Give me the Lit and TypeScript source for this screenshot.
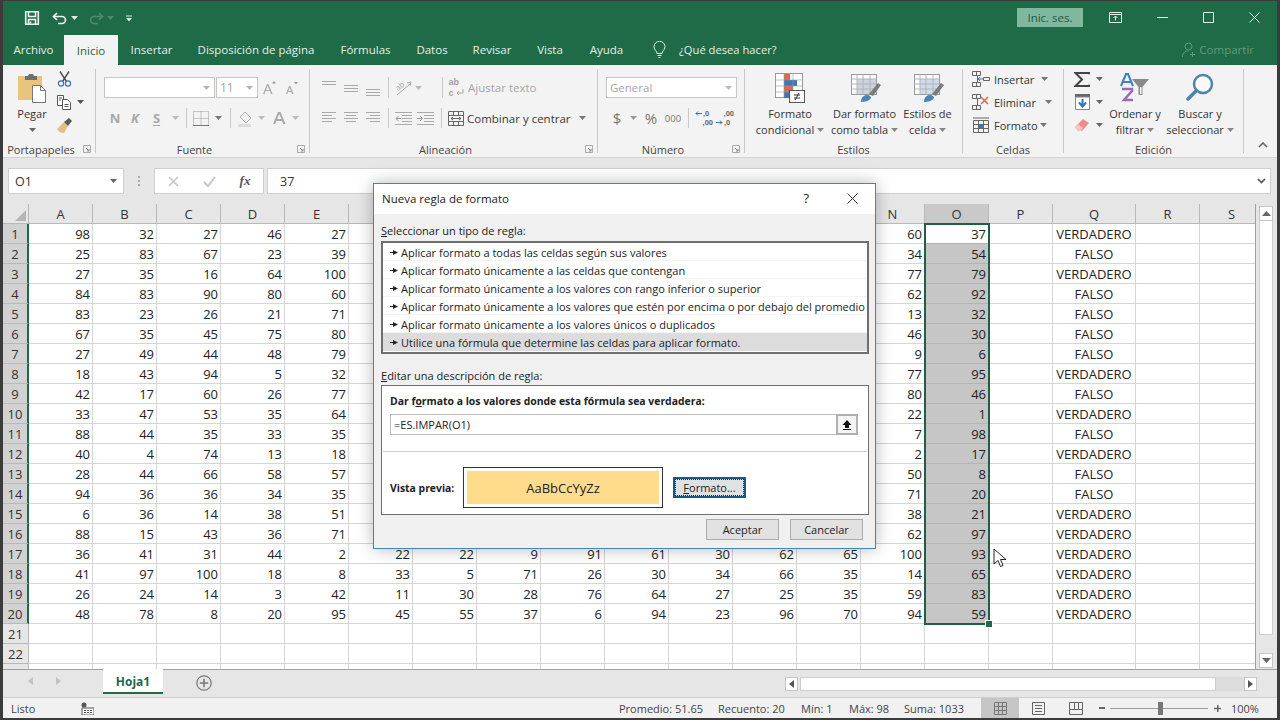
import { LitElement, html, svg, css } from 'lit';
import { customElement } from 'lit/decorators.js';

const COLS = ['A','B','C','D','E','F','G','H','I','J','K','L','M','N','O','P','Q','R','S'];
const ABCDE = [
  [98,32,27,46,27],[25,83,67,23,39],[27,35,16,64,100],[84,83,90,80,60],[83,23,26,21,71],
  [67,35,45,75,80],[27,49,44,48,79],[18,43,94,5,32],[42,17,60,26,77],[33,47,53,35,64],
  [88,44,35,33,35],[40,4,74,13,18],[28,44,66,58,57],[94,36,36,34,35],[6,36,14,38,51],
  [88,15,43,36,71],[36,41,31,44,2],[41,97,100,18,8],[26,24,14,3,42],[48,78,8,20,95],
];
// columns F to M, only the rows that stick out below the dialog
const FM: Record<number, number[]> = {
  16: [22,22,9,91,61,30,62,65],
  17: [33,5,71,26,30,34,66,35],
  18: [11,30,28,76,64,27,25,35],
  19: [45,55,37,6,94,23,96,70],
};
const N = [60,34,77,62,13,46,9,77,80,22,7,2,50,71,38,62,100,14,59,94];
const O = [37,54,79,92,32,30,6,95,46,1,98,17,8,20,21,97,93,65,83,59];

const RULES = [
  'Aplicar formato a todas las celdas según sus valores',
  'Aplicar formato únicamente a las celdas que contengan',
  'Aplicar formato únicamente a los valores con rango inferior o superior',
  'Aplicar formato únicamente a los valores que estén por encima o por debajo del promedio',
  'Aplicar formato únicamente a los valores únicos o duplicados',
  'Utilice una fórmula que determine las celdas para aplicar formato.',
];

const caret = (color = '#8a8a8a') => html`<svg width="7" height="4" viewBox="0 0 7 4"><path d="M0 0h7L3.5 4z" fill=${color}/></svg>`;
const launcher = () => html`<svg width="8" height="8" viewBox="0 0 8 8" fill="none" stroke="#aaa"><path d="M.5 7.5v-7h7v7z"/><path d="M3 3l3 3M6 4v2H4" stroke="#888"/></svg>`;
const vsep = () => html`<span class="vsep"></span>`;

const lines = (ys: [number, number, number][], color = '#a9a9a9') => html`<svg width="16" height="16" viewBox="0 0 16 16" stroke=${color} fill="none">${ys.map(([y, a, b]) => svg`<path d="M${a} ${y + 0.5}H${b}"/>`)}</svg>`;
const tableIcon = (fill: string) => html`<svg width="34" height="30" viewBox="0 0 34 30" fill="none">
  <rect x="3.500" y="1.500" width="25" height="20" fill="#fff" stroke="#9a9a9a"/>
  <rect x="9" y="6" width="19" height="15" fill=${fill}/>
  <path d="M3.500 6h25M3.500 11h25M3.500 16h25M9 1.500v20M15 1.500v20M22 1.500v20" stroke="#b4b4b4"/>
  <path d="M21 21L30 10l3 2-8 11z" fill="#7b7b7b"/>
  <path d="M13 29c0-5 3-7 6-7 3 0 4 2 4 3-2 3-6 4-10 4z" fill="#4a86b5"/>
</svg>`;

@customElement('app-root')
export class AppRoot extends LitElement {
  static styles = css`
    :host { display: block; width: 1280px; height: 720px; overflow: hidden; }
    * { box-sizing: border-box; }
    svg { display: block; flex: none; }
    .app {
      position: relative; width: 1280px; height: 720px; padding: 1px 3px 2px;
      background: #3b3b3b; font-family: "Open Sans", sans-serif; font-size: 11px; color: #333;
    }
    .win { display: flex; flex-direction: column; height: 717px; background: #e6e6e6; }
    .cell { display: flex; align-items: center; justify-content: center; min-width: 0; }
    .vsep { width: 1px; height: 100%; background: #c8c8c8; }

    .title { flex: none; height: 32px; background: #1f6b47; display: flex; align-items: center; }
    .qat { display: flex; align-items: center; margin: 2px 0 0 21px; }
    .qat .cell { height: 20px; }
    .undo { margin-left: 12px; } .undoc { margin-left: 4px; } .redo { margin-left: 11px; } .redoc { margin-left: 3px; } .custom { margin-left: 12px; }
    .title .right { margin-left: auto; display: flex; align-items: center; }
    .signin {
      width: 66px; height: 19px; margin-right: 26px; background: #80b89f; color: #1f5a40;
      display: flex; align-items: center; justify-content: center; font-size: 11.5px;
    }
    .winbtn { width: 46px; height: 20px; display: flex; align-items: center; justify-content: center; }
    .winbtn.disp { width: 13px; margin-right: 17px; }

    .tabs { flex: none; height: 32px; background: #1f6b47; display: flex; color: #e4efe9; font-size: 11.5px; }
    .tablist { display: grid; grid-template-columns: 61px 54px 67px 142px 77px 56px 64px 52px 61px; }
    .tab { display: flex; align-items: center; justify-content: center; padding-top: 1px; }
    .tab.on { background: #f3f3f3; color: #2d5d46; margin-top: 2px; padding-top: 0; }
    .tell { display: flex; align-items: center; margin-left: 16px; padding-top: 1px; gap: 13px; font-size: 11.2px; }
    .share { margin-left: auto; display: flex; align-items: center; gap: 3px; padding: 1px 23px 0 0; color: #5f9a7e; }

    .ribbon { flex: none; height: 93px; background: #f3f3f3; border-bottom: 1px solid #d2d2d2; display: flex; padding-top: 4px; }
    .g { flex: none; height: 84px; border-right: 1px solid #c9c9c9; display: flex; flex-direction: column; }
    .g1 { width: 93px; } .g2 { width: 214px; } .g3 { width: 288px; } .g4 { width: 147px; }
    .g5 { width: 218px; } .g6 { width: 101px; } .g7 { width: 180px; }
    .gbody { flex: none; height: 72px; display: flex; }
    .glabel { flex: none; height: 16px; display: flex; align-items: center; color: #444; }
    .glabel b { flex: 1; text-align: center; font-weight: 400; }
    .glabel i { width: 16px; height: 16px; display: flex; align-items: center; justify-content: center; }
    .pegar { width: 46px; margin-left: 6px; }
    .big { display: flex; flex-direction: column; align-items: center; line-height: 16px; padding-top: 4px; white-space: nowrap; }
    .big .ic { height: 30px; margin-bottom: 3px; display: flex; justify-content: center; }
    .big .l2 { display: flex; align-items: center; gap: 3px; height: 16px; }
    .pegcaret { margin-top: 6px; }
    .small { display: flex; flex-direction: column; gap: 3px; }
    .srow { height: 20px; display: grid; align-items: center; justify-items: center; }
    .s-clip { grid-template-columns: 18px 14px; }
    .s-edit { grid-template-columns: 20px 14px; margin-left: 8px; }

    .rows { display: flex; flex-direction: column; gap: 10px; padding-top: 8px; }
    .r1 { height: 21px; } .r2 { height: 20px; }
    .rgrid { display: grid; align-items: center; justify-items: center; }
    .rgrid .vsep { height: 100%; }
    .combo { height: 21px; background: #fff; border: 1px solid #c6c6c6; display: flex; align-items: center; justify-content: flex-end; padding-right: 4px; color: #a5a5a5; }
    .fontrow1 { display: flex; margin-left: 8px; align-items: center; }
    .fontname { width: 111px; }
    .fontsize { width: 42px; margin-left: 1px; justify-content: space-between; padding-left: 3px; font-size: 12px; }
    .fontA { width: 22px; display: flex; justify-content: center; color: #aaa; }
    .fontrow2 { margin-left: 9px; grid-template-columns: 20px 20px 23px 14px 8px 22px 12px 12px 18px 14px 22px 10px; color: #a8a8a8; font-weight: 700; font-size: 13px; }
    .fontrow2 u { text-underline-offset: 2px; }
    .al1 { margin-left: 8px; grid-template-columns: 22px 22px 22px 8px 22px 8px 16px 8px 22px auto; }
    .al2 { margin-left: 8px; grid-template-columns: 22px 22px 22px 8px 22px 23px 8px 22px auto; }
    .altext { justify-self: start; white-space: nowrap; display: flex; align-items: center; font-size: 11.5px; }
    .dim { color: #a6a6a6; }
    .merge { gap: 8px; color: #3a3a3a; }
    .general { width: 131px; margin-left: 8px; justify-content: space-between; padding: 0 4px 0 3px; }
    .general span { font-size: 11.5px; }
    .numrow { margin-left: 8px; grid-template-columns: 22px 10px 26px 18px 12px 20px 22px; color: #777; }
    .dollar { font-size: 15px; } .pct { font-size: 15px; } .th { font-size: 9.5px; }
    .orient { display: grid; width: 17px; height: 17px; align-items: center; justify-items: center; }
    .orient > * { grid-area: 1 / 1; }
    .orient span { font-size: 8px; line-height: 8px; color: #aaa; transform: translate(-3px, -2px) rotate(-40deg); }
    .wrapi { display: grid; grid-template-columns: auto auto; width: 17px; font-family: "Liberation Sans", sans-serif; font-size: 9px; line-height: 10.5px; font-weight: 700; color: #a0a0a0; align-items: center; }
    .wrapi span:first-child { grid-column: 1 / 3; }
    .dec { display: grid; grid-template-columns: 8px 10px; width: 18px; font-family: "Liberation Sans", sans-serif; font-size: 7.5px; line-height: 9px; font-weight: 700; color: #666; align-items: center; }
    .dec .wide { grid-column: 1 / 3; justify-self: end; }
    .b1 { width: 84px; margin-left: 3px; } .b2 { width: 65px; } .b3 { width: 61px; }
    .cellrows { padding-left: 9px; gap: 3px; display: flex; flex-direction: column; }
    .crow { height: 20px; display: flex; align-items: center; gap: 4px; white-space: nowrap; }
    .crow .t1 { margin-left: 3px; } .crow .t2 { margin-left: 5px; } .crow .t3 { margin-left: -2px; }
    .b4 { width: 58px; } .b5 { width: 72px; }
    .collapse { flex: 1; height: 84px; display: flex; align-items: flex-end; padding: 0 0 5px 14px; }

    .fbar { flex: none; height: 46px; padding: 10px 6px 0 5px; display: flex; align-items: flex-start; }
    .fbox { height: 26px; background: #fff; border: 1px solid #cfcfcf; display: flex; align-items: center; }
    .name { width: 116px; padding: 0 6px 0 6px; justify-content: space-between; font-size: 12.5px; }
    .dots { width: 30px; height: 26px; display: flex; align-items: center; justify-content: center; }
    .fx { width: 110px; display: grid; grid-template-columns: 36px 36px 36px; justify-items: center; align-items: center; }
    .fxt { font-family: "Liberation Serif", serif; font-style: italic; font-weight: 700; font-size: 13px; color: #555; }
    .input { flex: 1; margin-left: 3px; padding: 0 4px 0 12px; justify-content: space-between; font-size: 12.5px; }

    .sheet { flex: none; height: 465px; display: flex; }
    .cells {
      position: relative; width: 1253px; height: 465px; overflow: hidden; background: #fff;
      display: grid; grid-template-columns: 26px repeat(16, 64px) 83px 64px 64px; grid-auto-rows: 20px;
      font-size: 13px; color: #222; border-right: 1px solid #9f9f9f;
    }
    .c { border-right: 1px solid #d6d6d6; border-bottom: 1px solid #d6d6d6; display: flex; align-items: center; justify-content: flex-end; padding: 1px 2px 0 0; line-height: 1; overflow: hidden; }
    .c.sel { background: #c6c6c6; border-color: #b4b4b4; }
    .c.first { background: #fff; }
    .c.bool { justify-content: center; padding: 1px 0 0; }
    .h { background: #e6e6e6; border-right: 1px solid #b9b9b9; border-bottom: 1px solid #b9b9b9; display: flex; align-items: center; justify-content: center; color: #333; }
    .h.corner { justify-content: flex-end; align-items: flex-end; padding: 0 2px 2px 0; }
    .h.active { background: #c9c9c9; }
    .h.rowsel { background: #d2d2d2; border-right: 2px solid #1f6b47; }
    .outline { position: absolute; left: 921px; top: 19px; width: 66px; height: 402px; border: 2px solid #1f5f46; pointer-events: none; }
    .handle { position: absolute; left: 983px; top: 417px; width: 6px; height: 6px; background: #1f6b47; outline: 1px solid #fff; }
    .vscroll { flex: 1; padding: 2px 4px 1px 3px; display: flex; flex-direction: column; }
    .sbtn { flex: none; background: #fff; border: 1px solid #c6c6c6; display: flex; align-items: center; justify-content: center; }
    .vscroll .sbtn { height: 15px; }
    .vthumb { flex: none; height: 414px; background: #fff; border: 1px solid #cfcfcf; border-top: 0; }
    .vtrack { flex: 1; }

    .sheets { flex: none; height: 28px; display: flex; border-top: 1px solid #9f9f9f; }
    .navs { width: 100px; display: flex; padding: 0 0 5px 25px; gap: 23px; align-items: center; }
    .stab { width: 60px; height: 25px; margin-top: -1px; padding-top: 2px; background: #fff; border-bottom: 2px solid #1f6b47; color: #24654a; font-weight: 700; font-size: 12px; display: flex; align-items: center; justify-content: center; }
    .plus { margin: 5px 0 0 33px; }
    .hscroll { margin: 7px 20px 0 auto; width: 472px; height: 14px; display: flex; }
    .hscroll .sbtn { width: 13px; }
    .hthumb { width: 416px; margin-left: 2px; background: #fff; border: 1px solid #cfcfcf; }
    .htrack { flex: 1; background: #dcdcdc; }

    .status { flex: none; height: 21px; background: #f1f1f1; border-top: 1px solid #cfcfcf; display: flex; align-items: center; font-size: 11px; color: #444; }
    .listo { margin-left: 8px; width: 70px; }
    .stats { display: grid; grid-template-columns: 99px 83px 48px 55px 76px; margin-left: 525px; white-space: nowrap; }
    .views { display: grid; grid-template-columns: 38px 38px 38px; margin-left: 1px; height: 20px; }
    .views .on { background: #c6c6c6; }
    .zoom { display: flex; align-items: center; margin-left: 4px; }
    .slider { position: relative; width: 98px; height: 1px; background: #9c9c9c; margin: 0 6px 0 5px; }
    .thumb { position: absolute; left: 48px; top: -6px; width: 5px; height: 13px; background: #777; }
    .pct100 { margin-left: 10px; }

    .dialog {
      position: absolute; left: 373px; top: 183px; width: 503px; height: 366px;
      background: #f0f0f0; border: 1px solid #3e86bd; box-shadow: 0 0 16px rgba(0,0,0,.28);
      display: flex; flex-direction: column; font-size: 11px; color: #222;
    }
    .dtitle { flex: none; height: 30px; background: #fff; display: flex; align-items: center; padding: 0 17px 2px 8px; font-size: 11.5px; }
    .dtitle .q { margin-left: auto; margin-right: 38px; font-size: 13px; }
    .dbody { padding: 0 6px 0 7px; flex: 1; display: flex; flex-direction: column; }
    .cap { height: 27px; padding-top: 9px; line-height: 16px; }
    .rulelist { height: 113px; border: 2px solid #6e6e6e; background: #fff; display: flex; flex-direction: column; }
    .rule { flex: none; height: 18px; padding: 1px 0 0 7px; display: flex; align-items: center; gap: 3px; border-bottom: 1px solid #f4f4f4; white-space: nowrap; }
    .rule.on { background: #dcdcdd; border: 0; }
    .cap2 { height: 31px; padding-top: 14px; line-height: 16px; }
    .panel { height: 130px; background: #fff; border: 1px solid #6e6e6e; padding: 0 8px; display: flex; flex-direction: column; }
    .blabel { font-weight: 700; font-size: 10.4px; height: 28px; display: flex; align-items: center; padding-top: 2px; }
    .inputf { height: 21px; margin-right: 2px; border: 1px solid #bcbcbc; display: flex; align-items: center; justify-content: space-between; padding-left: 3px; }
    .upbtn { width: 22px; height: 21px; margin-right: -1px; border: 2px solid #b0b0b0; display: flex; align-items: center; justify-content: center; background: #f4f4f4; }
    .rulehr { height: 1px; background: #cfcfcf; margin: 16px -7px 0; }
    .prev { display: flex; align-items: center; margin-top: 15px; }
    .prevlabel { font-weight: 700; font-size: 10.4px; width: 73px; }
    .box { width: 200px; height: 41px; border: 1px solid #333; padding: 3px; }
    .box div { height: 100%; background: #ffdc8c; display: flex; align-items: center; justify-content: center; font-size: 13px; }
    .fmt { margin-left: 10px; width: 73px; height: 21px; border: 2px solid #17598f; background: #e1e1e1; display: flex; align-items: center; justify-content: center; }
    .fmt span { border: 1px dotted #222; width: 100%; height: 100%; display: flex; align-items: center; justify-content: center; }
    .btns { display: flex; justify-content: flex-end; gap: 11px; margin-top: 4px; padding-right: 6px; }
    .btn { width: 73px; height: 21px; background: #e1e1e1; border: 1px solid #adadad; display: flex; align-items: center; justify-content: center; }
    .cursor { position: absolute; left: 993px; top: 548px; }
  `;

  private renderTitle() {
    return html`<div class="title">
      <div class="qat">
        <span class="cell"><svg width="16" height="16" viewBox="0 0 16 16" fill="none" stroke="#eef6f2" stroke-width="1.600"><path d="M1.700 1.700h12.600v12.600H1.700z"/><path d="M4.500 2v4.500h7V2M4.500 14v-4.500h7V14M6.500 11.500v2" /></svg></span>
        <span class="cell undo"><svg width="15" height="13" viewBox="0 0 15 13" fill="none" stroke="#eef6f2" stroke-width="1.700"><path d="M1.500 4.500H10a3.500 3.500 0 010 7H6"/><path d="M5 1L1.500 4.500 5 8"/></svg></span>
        <span class="cell undoc">${caret('#dfeae4')}</span>
        <span class="cell redo"><svg width="15" height="13" viewBox="0 0 15 13" fill="none" stroke="#4b8a6c" stroke-width="1.700"><path d="M13.500 4.500H5a3.500 3.500 0 000 7h4"/><path d="M10 1l3.500 3.500L10 8"/></svg></span>
        <span class="cell redoc">${caret('#4b8a6c')}</span>
        <span class="cell custom"><svg width="7" height="7" viewBox="0 0 7 7"><path d="M0 .5h6v1H0zM0 3h6L3 6.500z" fill="#dfeae4"/></svg></span>
      </div>
      <div class="right">
        <div class="signin">Inic. ses.</div>
        <span class="winbtn disp"><svg width="13" height="11" viewBox="0 0 13 11" fill="none" stroke="#e6f1eb"><path d="M.5.5h12v10H.5zM.5 2.500h12M6.500 8.500v-4M4.500 6l2-2 2 2"/></svg></span>
        <span class="winbtn"><svg width="11" height="1"><path d="M0 .5h11" stroke="#e6f1eb"/></svg></span>
        <span class="winbtn"><svg width="11" height="11" fill="none" stroke="#e6f1eb"><path d="M.5.5h10v10H.5z"/></svg></span>
        <span class="winbtn"><svg width="11" height="11" fill="none" stroke="#e6f1eb"><path d="M.5.5l10 10M10.500.5l-10 10"/></svg></span>
      </div>
    </div>`;
  }

  private renderTabs() {
    const names = ['Archivo','Inicio','Insertar','Disposición de página','Fórmulas','Datos','Revisar','Vista','Ayuda'];
    return html`<div class="tabs">
      <div class="tablist">
        ${names.map((n) => html`<div class="tab ${n === 'Inicio' ? 'on' : ''}">${n}</div>`)}
      </div>
      <div class="tell">
        <svg width="13" height="18" viewBox="0 0 13 18" fill="none" stroke="#e4efe9"><path d="M4 12.500C4 10 1 9 1 5.800a5.500 5.500 0 0111 0C12 9 9 10 9 12.500z"/><path d="M4.500 14.500h4M5.500 16.500h2"/></svg>
        <span>¿Qué desea hacer?</span>
      </div>
      <div class="share">
        <svg width="14" height="16" viewBox="0 0 14 16" fill="none" stroke="#5f9a7e"><circle cx="6.500" cy="4.500" r="3.500"/><path d="M.5 15c0-4 2.500-6 6-6M10.500 10v5M8 12.500h5"/></svg>
        <span>Compartir</span>
      </div>
    </div>`;
  }

  private renderClipboard() {
    return html`<div class="g g1">
      <div class="gbody">
        <div class="big pegar">
          <div class="ic"><svg width="30" height="30" viewBox="0 0 30 30"><path d="M1 3h24v24H1z" fill="#e9c47f"/><path d="M8 3h3l1-2h4l1 2h3v4H8z" fill="#6f6f6f"/><path d="M15.500 12.500h8l5 5v12h-13z" fill="#fff" stroke="#777"/><path d="M23.500 12.500v5h5" fill="none" stroke="#777"/></svg></div>
          <span>Pegar</span>
          <span class="pegcaret">${caret('#666')}</span>
        </div>
        <div class="small">
          <div class="srow s-clip"><svg width="15" height="16" viewBox="0 0 15 16" fill="none"><path d="M3 .5l6.500 10M12 .5L5.500 10.500" stroke="#4d4d4d" stroke-width="1.400"/><circle cx="4" cy="12.500" r="2.600" stroke="#3f74a5" stroke-width="1.200"/><circle cx="11" cy="12.500" r="2.600" stroke="#3f74a5" stroke-width="1.200"/></svg></div>
          <div class="srow s-clip"><svg width="16" height="16" viewBox="0 0 16 16" fill="#fff" stroke="#555"><path d="M1.500 1.500h6v10h-6z"/><path d="M6.500 5.500h5l3 3v7h-8z"/><path d="M8.500 10.500h4M8.500 12.500h4M3 4h3M3 6h2" fill="none"/></svg>${caret('#555')}</div>
          <div class="srow s-clip"><svg width="17" height="17" viewBox="0 0 17 17"><path d="M1 12l7-7 4 4-4 7c-3 0-5-1-7-4z" fill="#e0bf80"/><path d="M8 5l4 4 4-5-3-3z" fill="#5a5a5a"/></svg></div>
        </div>
      </div>
      <div class="glabel"><b>Portapapeles</b><i>${launcher()}</i></div>
    </div>`;
  }

  private renderFont() {
    return html`<div class="g g2">
      <div class="gbody">
        <div class="rows">
          <div class="fontrow1 r1">
            <div class="combo fontname">${caret('#b5b5b5')}</div>
            <div class="combo fontsize"><span>11</span>${caret('#b5b5b5')}</div>
            <span class="fontA"><svg width="14" height="14" viewBox="0 0 14 14"><path d="M1 13L5 3h1.500l4 10H9L8 10H3.500l-1 3zM4 9h3.500L5.800 4.500z" fill="#aaa"/><path d="M10 2.500h4L12 0z" fill="#999"/></svg></span>
            <span class="fontA"><svg width="14" height="14" viewBox="0 0 14 14"><path d="M2 13l3-8h1.500l3 8H8l-.7-2H4l-.7 2zM4.400 10h2.500L5.700 6.500z" fill="#aaa"/><path d="M10 1h4l-2 2.500z" fill="#999"/></svg></span>
          </div>
          <div class="fontrow2 rgrid r2">
            <span>N</span><i>K</i><u>S</u>
            ${caret('#bbb')}${vsep()}
            <svg width="16" height="15" viewBox="0 0 16 15" fill="none" stroke="#999" stroke-dasharray="1 1"><path d="M.5.5h15v14H.5zM8 .5v14M.5 7.500h15"/><path d="M0 14.500h16" stroke="#777" stroke-dasharray="none"/></svg>
            ${caret('#777')}${vsep()}
            <svg width="17" height="17" viewBox="0 0 17 17"><path d="M8 2l6 6-5 5-6-6z" fill="none" stroke="#aaa"/><path d="M1 14h13v3H1z" fill="#ddd"/></svg>
            ${caret('#bbb')}
            <svg width="13" height="15" viewBox="0 0 13 15"><path d="M0 13L5 1h2.500l5 12h-2.300l-1.100-3H3.400l-1.100 3zM4.100 8h4.400L6.300 3z" fill="#a8a8a8"/></svg>
            ${caret('#bbb')}
          </div>
        </div>
      </div>
      <div class="glabel"><b>Fuente</b><i>${launcher()}</i></div>
    </div>`;
  }

  private renderAlign() {
    const indent = (flip: boolean) => html`<svg width="17" height="13" viewBox="0 0 17 13" fill="none" stroke="#aaa"><path d="M7 3.500h10M7 6.500h10M7 9.500h10M0 .5h17M0 12.500h17"/><path d=${flip ? 'M0 6.500h5M3 4l2.500 2.500L3 9' : 'M1 6.500h5M3.500 4L1 6.500 3.500 9'} stroke="#8a9bab"/></svg>`;
    return html`<div class="g g3">
      <div class="gbody">
        <div class="rows">
          <div class="al1 rgrid r1">
            ${lines([[1,1,15],[4,1,15]])}
            ${lines([[5,1,15],[8,1,15],[11,1,15]])}
            ${lines([[9,1,15],[12,1,15],[15,1,15]])}
            ${vsep()}
            <div class="orient">
              <svg width="17" height="17" viewBox="0 0 17 17" fill="none" stroke="#aaa"><path d="M2 16L15 5M12 4l4-1-1 4"/></svg>
              <span>ab</span>
            </div>
            ${caret('#bbb')}<span></span>${vsep()}
            <div class="wrapi">
              <span>ab</span><span>c</span>
              <svg width="9" height="7" viewBox="0 0 9 7" fill="none" stroke="#a8a8a8"><path d="M8 0v4H2M2 4l2-2M2 4l2 2"/></svg>
            </div>
            <span class="altext dim">Ajustar texto</span>
          </div>
          <div class="al2 rgrid r2">
            ${lines([[2,1,15],[5,1,11],[8,1,15],[11,1,11]])}
            ${lines([[2,1,15],[5,3,13],[8,1,15],[11,3,13]])}
            ${lines([[2,1,15],[5,5,15],[8,1,15],[11,5,15]])}
            ${vsep()}${indent(false)}${indent(true)}${vsep()}
            <svg width="16" height="15" viewBox="0 0 16 15" fill="none" stroke="#666"><path d="M.5.5h15v14H.5zM.5 4.500h15M.5 10.500h15M5.500.5v4M10.500.5v4M5.500 10.500v4M10.500 10.500v4M3 7.500h10M3 7.500l2-1.500M3 7.500L5 9M13 7.500L11 6M13 7.500L11 9"/></svg>
            <span class="altext merge">Combinar y centrar ${caret('#777')}</span>
          </div>
        </div>
      </div>
      <div class="glabel"><b>Alineación</b><i>${launcher()}</i></div>
    </div>`;
  }

  private renderNumber() {
    const left = html`<svg width="7" height="5" viewBox="0 0 7 5" fill="none" stroke="#3f74a5"><path d="M7 2.500H1M3 .5L1 2.500l2 2"/></svg>`;
    const right = html`<svg width="7" height="5" viewBox="0 0 7 5" fill="none" stroke="#3f74a5"><path d="M0 2.500h6M4 .5l2 2-2 2"/></svg>`;
    return html`<div class="g g4">
      <div class="gbody">
        <div class="rows">
          <div class="combo general r1"><span>General</span>${caret('#bbb')}</div>
          <div class="numrow rgrid r2">
            <span class="dollar">$</span>${caret('#999')}
            <span class="pct">%</span><span class="th">000</span>${vsep()}
            <div class="dec">${left}<span>,0</span><span class="wide">,00</span></div>
            <div class="dec"><span class="wide">,00</span>${right}<span>,0</span></div>
          </div>
        </div>
      </div>
      <div class="glabel"><b>Número</b><i>${launcher()}</i></div>
    </div>`;
  }

  private renderStyles() {
    return html`<div class="g g5">
      <div class="gbody">
        <div class="big b1">
          <div class="ic"><svg width="31" height="30" viewBox="0 0 31 30" fill="none">
            <rect x=".5" y=".5" width="27" height="24" fill="#fff" stroke="#9a9a9a"/>
            <path d="M9 1h6v6H9z" fill="#d9694a"/><path d="M9 7h13v6H9z" fill="#3f74b5"/><path d="M9 13h9v6H9z" fill="#d9694a"/><path d="M9 19h5v6H9z" fill="#3f74b5"/>
            <path d="M.5 7h27M.5 13h27M.5 19h27M9 .5v24M18 .5v24" stroke="#9a9a9a" stroke-opacity=".6"/>
            <rect x="14.500" y="17.500" width="15" height="12" fill="#fff" stroke="#555"/>
            <path d="M19 22h6M19 25h6M24 20l-4 7" stroke="#333"/>
          </svg></div>
          <span>Formato</span><span class="l2">condicional ${caret('#888')}</span>
        </div>
        <div class="big b2">
          <div class="ic">${tableIcon('#cdd3df')}</div>
          <span>Dar formato</span><span class="l2">como tabla ${caret('#888')}</span>
        </div>
        <div class="big b3">
          <div class="ic">${tableIcon('#cfdcf0')}</div>
          <span>Estilos de</span><span class="l2">celda ${caret('#888')}</span>
        </div>
      </div>
      <div class="glabel"><b>Estilos</b></div>
    </div>`;
  }

  private renderCells() {
    return html`<div class="g g6">
      <div class="gbody">
        <div class="cellrows">
          <div class="crow"><svg width="18" height="16" viewBox="0 0 18 16" fill="none" stroke="#666"><path d="M.5.5h8v4h-8zM.5 11.500h8v4h-8zM4.500.5v4M4.500 11.500v4M.5 4.500h5v7h-5M11.500 6.500h6v3h-6z"/><path d="M6 8h5M8 6L6 8l2 2" stroke="#3f74a5"/></svg><span>Insertar</span><span class="t1">${caret('#777')}</span></div>
          <div class="crow"><svg width="18" height="16" viewBox="0 0 18 16" fill="none" stroke="#666"><path d="M.5.5h8v4h-8zM.5 11.500h8v4h-8zM4.500.5v4M4.500 11.500v4M.5 4.500h5v7h-5"/><path d="M9 3l7 7M16 3l-7 7" stroke="#e0664a" stroke-width="1.500"/></svg><span>Eliminar</span><span class="t2">${caret('#777')}</span></div>
          <div class="crow"><svg width="18" height="16" viewBox="0 0 18 16" fill="none" stroke="#666"><path d="M1.500 3.500h15v12h-15zM1.500 7.500h15M1.500 11.500h15M6.500 3.500v12M11.500 3.500v12M1 1h16" /><path d="M7 8h5v3H7z" fill="#3f74b5" stroke="none"/></svg><span>Formato</span><span class="t3">${caret('#777')}</span></div>
        </div>
      </div>
      <div class="glabel"><b>Celdas</b></div>
    </div>`;
  }

  private renderEdit() {
    return html`<div class="g g7">
      <div class="gbody">
        <div class="small">
          <div class="srow s-edit"><svg width="16" height="15" viewBox="0 0 16 15" fill="none" stroke="#444" stroke-width="2"><path d="M15 2.200V1H1.500L8 7.500 1.500 14H15v-1.200"/></svg>${caret('#666')}</div>
          <div class="srow s-edit"><svg width="15" height="16" viewBox="0 0 15 16"><path d="M0 0h15v3H0z" fill="#666"/><path d="M.5 3h14v12.500H.5z" fill="#fff" stroke="#888"/><path d="M7.500 5v7M4 8.500l3.500 4 3.500-4" fill="none" stroke="#2f74b5" stroke-width="2"/></svg>${caret('#666')}</div>
          <div class="srow s-edit"><svg width="15" height="13" viewBox="0 0 15 13"><path d="M0 8l8-8 6 4-7 8H3z" fill="#ef8b8b"/><path d="M0 8l3-3 5 4-2 3H3z" fill="#f6c4c4"/></svg>${caret('#666')}</div>
        </div>
        <div class="big b4">
          <div class="ic"><svg width="30" height="30" viewBox="0 0 30 30" fill="none"><path d="M1 13L6 1h2l5 12M3 9h8" stroke="#3f7fc0" stroke-width="2"/><path d="M2 16h10v2L4 27h9" stroke="#9a6bb0" stroke-width="2.500"/><path d="M12 6h17l-6.500 8v8h-4v-8z" fill="#8a8a8a"/><path d="M20 14h1.500v7H20z" fill="#fff"/></svg></div>
          <span>Ordenar y</span><span class="l2">filtrar ${caret('#888')}</span>
        </div>
        <div class="big b5">
          <div class="ic"><svg width="28" height="28" viewBox="0 0 28 28" fill="none"><circle cx="17" cy="11" r="9" stroke="#4d84ad" stroke-width="2.500" fill="#f9f9f9"/><path d="M10 18L2 26" stroke="#4d84ad" stroke-width="3.500" stroke-linecap="round"/></svg></div>
          <span>Buscar y</span><span class="l2">seleccionar ${caret('#888')}</span>
        </div>
      </div>
      <div class="glabel"><b>Edición</b></div>
    </div>`;
  }

  private renderFormula() {
    return html`<div class="fbar">
      <div class="fbox name"><span>O1</span>${caret('#666')}</div>
      <div class="dots"><svg width="3" height="11"><path d="M0 0h2v2H0zM0 4h2v2H0zM0 8h2v2H0z" fill="#aaa"/></svg></div>
      <div class="fbox fx">
        <svg width="11" height="11" fill="none" stroke="#c6c6c6" stroke-width="1.600"><path d="M1 1l9 9M10 1l-9 9"/></svg>
        <svg width="13" height="11" fill="none" stroke="#c6c6c6" stroke-width="2"><path d="M1 6l4 4 7-9"/></svg>
        <span class="fxt">fx</span>
      </div>
      <div class="fbox input"><span>37</span><svg width="9" height="6" fill="none" stroke="#555" stroke-width="1.600"><path d="M1 1l3.500 3.500L8 1"/></svg></div>
    </div>`;
  }

  private cellValue(r: number, col: string): string | number {
    const i = COLS.indexOf(col);
    if (r >= 20) return '';
    if (i < 5) return ABCDE[r][i];
    if (i < 13) return FM[r] ? FM[r][i - 5] : '';
    if (col === 'N') return N[r];
    if (col === 'O') return O[r];
    if (col === 'Q') return O[r] % 2 ? 'VERDADERO' : 'FALSO';
    return '';
  }

  private renderSheet() {
    const rows = Array.from({ length: 23 }, (_, r) => r);
    return html`<div class="sheet">
      <div class="cells">
        <div class="h corner"><svg width="11" height="11"><path d="M11 0v11H0z" fill="#b6b6b6"/></svg></div>
        ${COLS.map((c) => html`<div class="h ${c === 'O' ? 'active' : ''}">${c}</div>`)}
        ${rows.map((r) => html`
          <div class="h ${r < 20 ? 'rowsel' : ''}">${r < 22 ? r + 1 : ''}</div>
          ${COLS.map((c) => {
            const on = c === 'O' && r < 20;
            return html`<div class="c ${on ? 'sel' : ''} ${on && r === 0 ? 'first' : ''} ${c === 'Q' ? 'bool' : ''}">${this.cellValue(r, c)}</div>`;
          })}
        `)}
        <div class="outline"></div>
        <div class="handle"></div>
      </div>
      <div class="vscroll">
        <div class="sbtn"><svg width="9" height="5"><path d="M0 5h9L4.500 0z" fill="#666"/></svg></div>
        <div class="vthumb"></div>
        <div class="vtrack"></div>
        <div class="sbtn"><svg width="9" height="5"><path d="M0 0h9L4.500 5z" fill="#666"/></svg></div>
      </div>
    </div>`;
  }

  private renderSheets() {
    return html`<div class="sheets">
      <div class="navs">
        <svg width="5" height="8"><path d="M5 0v8L0 4z" fill="#c2c2c2"/></svg>
        <svg width="5" height="8"><path d="M0 0v8l5-4z" fill="#c2c2c2"/></svg>
      </div>
      <div class="stab">Hoja1</div>
      <div class="plus"><svg width="16" height="16" viewBox="0 0 16 16" fill="none" stroke="#777" stroke-width="1.200"><circle cx="8" cy="8" r="7.200"/><path d="M8 3.800v8.400M3.800 8h8.400" stroke-width="1.500"/></svg></div>
      <div class="hscroll">
        <div class="sbtn"><svg width="5" height="8"><path d="M5 0v8L0 4z" fill="#555"/></svg></div>
        <div class="hthumb"></div>
        <div class="htrack"></div>
        <div class="sbtn"><svg width="5" height="8"><path d="M0 0v8l5-4z" fill="#555"/></svg></div>
      </div>
    </div>`;
  }

  private renderStatus() {
    return html`<div class="status">
      <span class="listo">Listo</span>
      <svg width="13" height="13" viewBox="0 0 13 13"><circle cx="3" cy="3" r="2.500" fill="#555"/><path d="M1 6h12v7H1z" fill="#fff" stroke="#555"/><path d="M3 8h2v1H3zM6 8h2v1H6zM9 8h2v1H9zM3 10h2v1H3zM6 10h2v1H6zM9 10h2v1H9z" fill="#555"/></svg>
      <div class="stats"><span>Promedio: 51.65</span><span>Recuento: 20</span><span>Mín: 1</span><span>Máx: 98</span><span>Suma: 1033</span></div>
      <div class="views">
        <span class="cell on"><svg width="13" height="13" fill="none" stroke="#777"><path d="M.5.5h12v12H.5zM4.500.5v12M8.500.5v12M.5 4.500h12M.5 8.500h12"/></svg></span>
        <span class="cell"><svg width="13" height="13" fill="none" stroke="#666"><path d="M.5.5h12v12H.5zM3 3.500h7M3 6.500h7M3 9.500h7"/></svg></span>
        <span class="cell"><svg width="14" height="13" fill="none" stroke="#666"><path d="M.5.5h13v12H.5zM5.500.5v7M9.500.5v7M.5 7.500h13"/></svg></span>
      </div>
      <div class="zoom">
        <svg width="6" height="2"><path d="M0 0h6v2H0z" fill="#666"/></svg>
        <div class="slider"><div class="thumb"></div></div>
        <svg width="7" height="7"><path d="M3 0h1.500v7H3zM0 2.800h7v1.500H0z" fill="#666"/></svg>
      </div>
      <span class="pct100">100%</span>
    </div>`;
  }

  private renderDialog() {
    return html`<div class="dialog">
      <div class="dtitle">
        <span>Nueva regla de formato</span>
        <span class="q">?</span>
        <svg width="11" height="11" fill="none" stroke="#333"><path d="M.5.5l10 10M10.500.5l-10 10"/></svg>
      </div>
      <div class="dbody">
        <div class="cap"><u>S</u>eleccionar un tipo de regla:</div>
        <div class="rulelist">
          ${RULES.map((r, i) => html`<div class="rule ${i === 5 ? 'on' : ''}">
            <svg width="8" height="5"><path d="M0 2h3V0l5 2.500L3 5V3H0z" fill="#222"/></svg><span>${r}</span>
          </div>`)}
        </div>
        <div class="cap2"><u>E</u>ditar una descripción de regla:</div>
        <div class="panel">
          <div class="blabel"><span>Dar f<u>o</u>rmato a los valores donde esta fórmula sea verdadera:</span></div>
          <div class="inputf"><span>=ES.IMPAR(O1)</span>
            <div class="upbtn"><svg width="10" height="10"><path d="M5 0l4.500 5H7v3H3V5H.5zM1 9h8v1H1z" fill="#111"/></svg></div>
          </div>
          <div class="rulehr"></div>
          <div class="prev">
            <span class="prevlabel">Vista previa:</span>
            <div class="box"><div>AaBbCcYyZz</div></div>
            <div class="fmt"><span><u>F</u>ormato...</span></div>
          </div>
        </div>
        <div class="btns"><div class="btn">Aceptar</div><div class="btn">Cancelar</div></div>
      </div>
    </div>`;
  }

  render() {
    return html`<div class="app">
      <div class="win">
        ${this.renderTitle()}
        ${this.renderTabs()}
        <div class="ribbon">
          ${this.renderClipboard()}${this.renderFont()}${this.renderAlign()}${this.renderNumber()}
          ${this.renderStyles()}${this.renderCells()}${this.renderEdit()}
          <div class="collapse"><svg width="10" height="6" fill="none" stroke="#666" stroke-width="1.600"><path d="M1 5l4-4 4 4"/></svg></div>
        </div>
        ${this.renderFormula()}
        ${this.renderSheet()}
        ${this.renderSheets()}
        ${this.renderStatus()}
      </div>
      ${this.renderDialog()}
      <svg class="cursor" width="14" height="20" viewBox="0 0 14 20"><path d="M1 1v15l4-3.500 2.500 6 2.500-1-2.500-6H13z" fill="#fff" stroke="#222"/></svg>
    </div>`;
  }
}
